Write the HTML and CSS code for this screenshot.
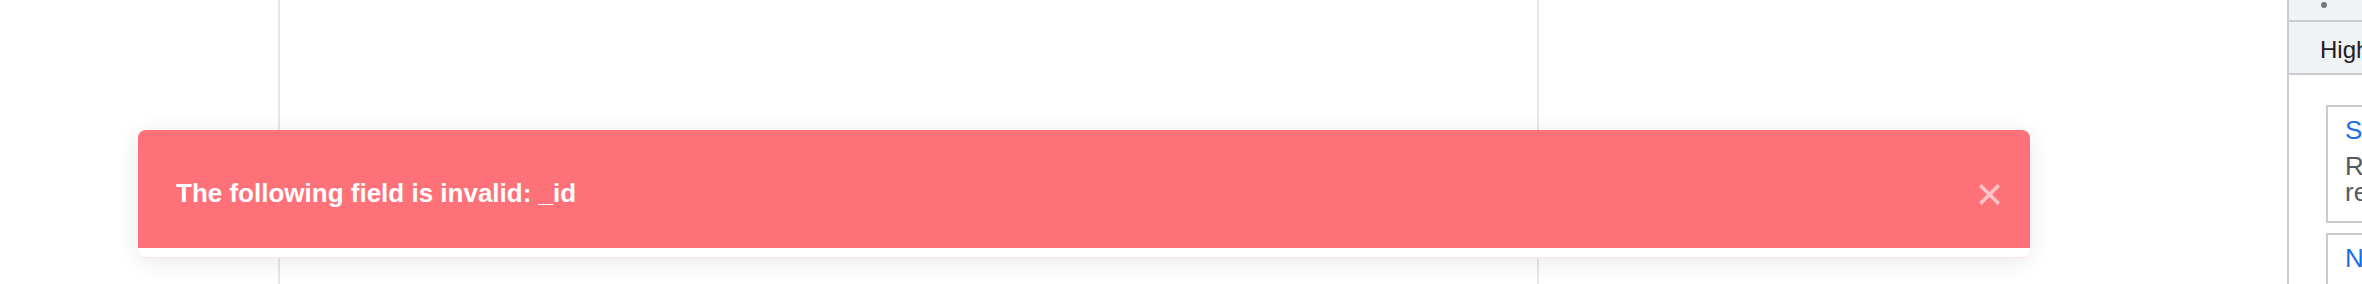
FILE: index.html
```html
<!DOCTYPE html>
<html lang="en">
<head>
<meta charset="utf-8">
<title>Validation error</title>
<link rel="stylesheet" href="styles.css">
</head>
<body>
<div class="page">
  <div class="gutter"></div>
  <div class="main"></div>
  <div class="side"></div>
  <aside class="panel">
    <div class="panel-row panel-row--dot"><span class="bullet"></span></div>
    <div class="panel-row panel-row--title">Highlights</div>
    <div class="cards">
      <div class="card">
        <div class="card-title">Summary</div>
        <div class="card-desc">Retrieve a document by id, returning all of its fields</div>
      </div>
      <div class="card">
        <div class="card-title">Notes</div>
      </div>
    </div>
  </aside>
</div>

<div class="toast" role="alert">
  <div class="toast-body">
    <span class="toast-msg">The following field is invalid: _id</span>
    <button class="toast-close" aria-label="Close">
      <svg width="21" height="21" viewBox="0 0 21 21" aria-hidden="true">
        <path d="M2.5 2.5 L18.5 18.5 M18.5 2.5 L2.5 18.5" stroke="currentColor" stroke-width="3.6" stroke-linecap="square" fill="none"/>
      </svg>
    </button>
  </div>
</div>
</body>
</html>
```

FILE: styles.css
```css
html, body {
  margin: 0;
  padding: 0;
  background: #ffffff;
}

body {
  font-family: "Liberation Sans", Arial, Helvetica, sans-serif;
  width: 2362px;
  height: 284px;
  overflow: hidden;
  position: relative;
}

.page {
  display: flex;
  height: 284px;
}

.gutter {
  width: 278px;
  flex: none;
  border-right: 2px solid #e6e6e6;
}

.main {
  width: 1257px;
  flex: none;
  border-right: 2px solid #e6e6e6;
}

.side {
  width: 748px;
  flex: none;
}

.panel {
  width: 420px;
  flex: none;
  border-left: 2px solid #c8ccd1;
  white-space: nowrap;
}

.panel-row {
  background: #f1f2f4;
  border-bottom: 2px solid #c8ccd1;
  box-sizing: border-box;
}

.panel-row--dot {
  height: 22px;
  padding: 2px 0 0 32px;
}

.bullet {
  display: block;
  width: 6px;
  height: 6px;
  border-radius: 50%;
  background: #72777d;
}

.panel-row--title {
  height: 53px;
  padding: 13px 0 0 31px;
  font-size: 24px;
  line-height: 30px;
  color: #202122;
}

.cards {
  padding: 30px 0 0 37px;
  display: flex;
  flex-direction: column;
  gap: 10px;
}

.card {
  border: 2px solid #c8ccd1;
  height: 118px;
  box-sizing: border-box;
  padding: 8px 17px 0 17px;
  overflow: hidden;
}

.card-title {
  font-size: 26px;
  line-height: 30px;
  color: #1a6fe6;
}

.card-desc {
  margin-top: 8px;
  font-size: 26px;
  line-height: 26px;
  color: #54595d;
  white-space: normal;
  width: 320px;
}

.toast {
  position: absolute;
  left: 138px;
  top: 130px;
  width: 1892px;
  height: 128px;
  box-sizing: border-box;
  background: #ffffff;
  border-radius: 8px;
  overflow: hidden;
  box-shadow: 0 4px 24px rgba(0, 0, 0, 0.09);
  border-bottom: 1px solid #fbe4e5;
}

.toast-body {
  height: 118px;
  box-sizing: border-box;
  background: #ff7178;
  display: flex;
  align-items: flex-start;
  justify-content: space-between;
  padding: 48px 30px 0 38px;
}

.toast-msg {
  font-size: 26px;
  line-height: 30px;
  font-weight: bold;
  color: #ffffff;
}

.toast-close {
  border: 0;
  padding: 0;
  margin-top: 6px;
  background: none;
  color: rgba(255, 255, 255, 0.6);
  width: 21px;
  height: 21px;
  display: flex;
}
```
